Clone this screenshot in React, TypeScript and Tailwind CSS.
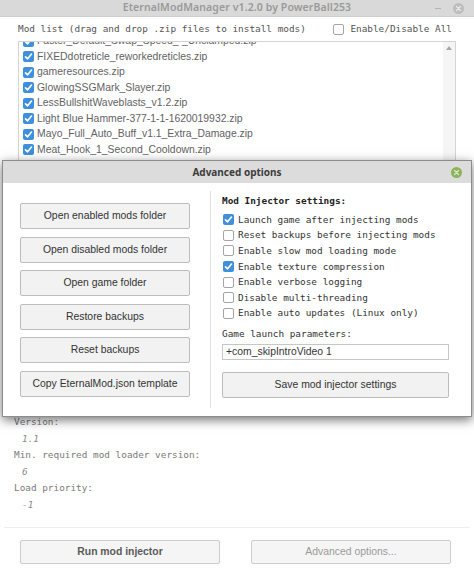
import React from 'react'

const mono = { fontFamily: '"DejaVu Sans Mono", "Liberation Mono", monospace' }
const sans = { fontFamily: '"Liberation Sans", Arial, sans-serif' }
const ui = { fontFamily: '"Noto Sans", "DejaVu Sans", sans-serif' }

const mods = [
  'Faster_Default_Swap_Speed_-_Unclamped.zip',
  'FIXEDdotreticle_reworkedreticles.zip',
  'gameresources.zip',
  'GlowingSSGMark_Slayer.zip',
  'LessBullshitWaveblasts_v1.2.zip',
  'Light Blue Hammer-377-1-1-1620019932.zip',
  'Mayo_Full_Auto_Buff_v1.1_Extra_Damage.zip',
  'Meat_Hook_1_Second_Cooldown.zip',
  'Nightmare_Marauder.zip',
  'No_Hud_Fade.zip',
]

const injectorOptions = [
  { label: 'Launch game after injecting mods', checked: true },
  { label: 'Reset backups before injecting mods', checked: false },
  { label: 'Enable slow mod loading mode', checked: false },
  { label: 'Enable texture compression', checked: true },
  { label: 'Enable verbose logging', checked: false },
  { label: 'Disable multi-threading', checked: false },
  { label: 'Enable auto updates (Linux only)', checked: false },
]

const folderButtons = [
  'Open enabled mods folder',
  'Open disabled mods folder',
  'Open game folder',
  'Restore backups',
  'Reset backups',
  'Copy EternalMod.json template',
]

function Check({ checked }: { checked: boolean }) {
  if (checked) {
    return (
      <span className="w-[11px] h-[11px] shrink-0 rounded-[2px] bg-[#3f8fdc] flex items-center justify-center">
        <svg width="9" height="9" viewBox="0 0 9 9">
          <polyline points="1.5,4.8 3.6,6.8 7.5,2" fill="none" stroke="#fff" strokeWidth="1.6" strokeLinecap="round" strokeLinejoin="round" />
        </svg>
      </span>
    )
  }
  return <span className="w-[11px] h-[11px] shrink-0 rounded-[2px] border border-[#a5a5a5] bg-white" />
}

function Btn({ children, className = '' }: { children: React.ReactNode; className?: string }) {
  return (
    <div
      style={sans}
      className={`h-[26px] flex items-center justify-center rounded-[2px] border border-[#bdbdbd] bg-[#f2f2f2] text-[10.4px] text-[#333] ${className}`}
    >
      {children}
    </div>
  )
}

function AdvancedDialog() {
  return (
    <div className="absolute left-[2px] top-[160px] w-[470px] h-[257px] bg-white border border-[#8c8c8c] shadow-[0_3px_10px_rgba(0,0,0,0.55)] flex flex-col">
      <div className="h-[22px] shrink-0 bg-[#dcdcdc] grid grid-cols-[1fr_auto_1fr] items-center">
        <span />
        <span style={ui} className="text-[10px] font-bold text-[#3c3c3c]">Advanced options</span>
        <span className="flex justify-end pr-[9px]">
          <span className="w-[11px] h-[11px] rounded-full bg-[#8db35a] flex items-center justify-center">
            <svg width="7" height="7" viewBox="0 0 7 7">
              <path d="M1.5 1.5 L5.5 5.5 M5.5 1.5 L1.5 5.5" stroke="#d9e8c4" strokeWidth="1.3" strokeLinecap="round" />
            </svg>
          </span>
        </span>
      </div>
      <div className="flex flex-1">
        <div className="w-[207px] shrink-0 pl-[17px] pt-[20px] flex flex-col gap-[7.5px]">
          {folderButtons.map((b) => (
            <Btn key={b} className="w-[170px]">{b}</Btn>
          ))}
        </div>
        <div className="w-px bg-[#e2e2e2] my-[8px]" />
        <div className="pl-[11px] pt-[11px] w-[239px]">
          <div style={mono} className="h-[14px] leading-[14px] text-[9.4px] font-bold text-[#222]">Mod Injector settings:</div>
          <div className="mt-[4px]">
            {injectorOptions.map((o) => (
              <div key={o.label} className="h-[15.6px] flex items-center gap-[4px] pl-[1px]">
                <Check checked={o.checked} />
                <span style={mono} className="text-[9.4px] text-[#333] whitespace-nowrap">{o.label}</span>
              </div>
            ))}
          </div>
          <div style={mono} className="mt-[5.6px] h-[14px] leading-[14px] text-[9.4px] text-[#333]">Game launch parameters:</div>
          <div style={sans} className="mt-[3px] w-[227px] h-[16px] border border-[#c6c6c6] flex items-center pl-[3px] text-[10.4px] text-[#333]">
            +com_skipIntroVideo 1
          </div>
          <Btn className="mt-[12px] w-[227px]">Save mod injector settings</Btn>
        </div>
      </div>
    </div>
  )
}

export default function App() {
  return (
    <div className="relative w-[474px] h-[579px] bg-white overflow-hidden">
      <div className="h-[17px] bg-[#d9d9d9] border-b border-[#cfcfcf] grid grid-cols-[1fr_auto_1fr] items-center">
        <span />
        <span style={ui} className="text-[10.5px] font-semibold text-[#9a9a9a] tracking-[0.1px]">
          EternalModManager v1.2.0 by PowerBall253
        </span>
        <span className="flex justify-end items-center gap-[12px] pr-[10px]">
          <span className="w-[6px] h-px bg-[#b5b5b5]" />
          <span className="w-[11px] h-[11px] rounded-full bg-[#bdbdbd] flex items-center justify-center">
            <svg width="7" height="7" viewBox="0 0 7 7">
              <path d="M1.5 1.5 L5.5 5.5 M5.5 1.5 L1.5 5.5" stroke="#e9e9e9" strokeWidth="1.3" strokeLinecap="round" />
            </svg>
          </span>
        </span>
      </div>

      <div className="px-[18px] pt-[5px]">
        <div className="h-[14px] flex items-center justify-between pr-[4px]">
          <span style={mono} className="text-[9.4px] text-[#555]">Mod list (drag and drop .zip files to install mods)</span>
          <span className="flex items-center gap-[6px]">
            <Check checked={false} />
            <span style={mono} className="text-[9.4px] text-[#555]">Enable/Disable All</span>
          </span>
        </div>
        <div className="mt-[5px] h-[365px] border border-[#d4d4d4] flex overflow-hidden">
          <div className="flex-1 overflow-hidden">
            <div className="mt-[-8.5px]">
              {mods.map((m) => (
                <div key={m} className="h-[15.5px] flex items-center gap-[3px] pl-[4px]">
                  <Check checked={true} />
                  <span style={sans} className="text-[10.4px] text-[#626262] whitespace-nowrap">{m}</span>
                </div>
              ))}
            </div>
          </div>
          <div className="w-[12px] bg-[#f5f5f5] flex justify-center pt-[4px]">
            <svg width="6" height="4" viewBox="0 0 6 4">
              <polygon points="3,0 6,4 0,4" fill="#a8a8a8" />
            </svg>
          </div>
        </div>
      </div>

      <div style={mono} className="px-[14px] pt-[8px] text-[9.4px] text-[#7a7a7a]">
        {[
          ['Version:', '1.1'],
          ['Min. required mod loader version:', '6'],
          ['Load priority:', '-1'],
        ].map(([k, v]) => (
          <React.Fragment key={k}>
            <div className="h-[16.5px] leading-[16.5px]">{k}</div>
            <div className="h-[16.5px] leading-[16.5px] pl-[8px] italic text-[#8a8a8a]">{v}</div>
          </React.Fragment>
        ))}
      </div>

      <div className="mx-[4px] mt-[14px] h-px bg-[#eeeeee]" />
      <div className="flex gap-[31px] pl-[20px] mt-[12px]">
        <div style={sans} className="w-[200px] h-[24px] flex items-center justify-center rounded-[2px] border border-[#cdcdcd] bg-[#f5f5f5] text-[10.4px] font-bold text-[#5a5a5a]">
          Run mod injector
        </div>
        <div style={sans} className="w-[200px] h-[24px] flex items-center justify-center rounded-[2px] border border-[#cdcdcd] bg-[#f5f5f5] text-[10.4px] text-[#9a9a9a]">
          Advanced options...
        </div>
      </div>

      <AdvancedDialog />
    </div>
  )
}
